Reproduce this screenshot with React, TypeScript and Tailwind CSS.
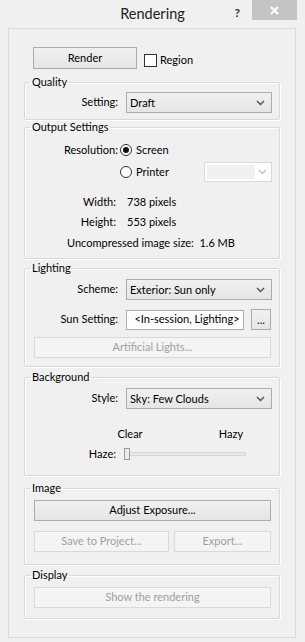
import React from 'react'

const font = "font-['Lato','Noto_Sans',sans-serif]"

function Chevron({ light }: { light?: boolean }) {
  return (
    <svg width="9" height="6" viewBox="0 0 9 6" className="shrink-0">
      <path d="M1 1 L4.5 4.5 L8 1" fill="none" stroke={light ? '#c4c4c4' : '#555'} strokeWidth="1.5" />
    </svg>
  )
}

function Select({ value, className = '' }: { value: string; className?: string }) {
  return (
    <div
      className={`flex items-center justify-between h-[21px] border border-[#acacac] bg-gradient-to-b from-[#f0f0f0] to-[#e5e5e5] pl-[3px] pr-[6px] ${className}`}
    >
      <span className="leading-none">{value}</span>
      <Chevron />
    </div>
  )
}

function Button({ label, disabled, className = '' }: { label: string; disabled?: boolean; className?: string }) {
  return (
    <div
      className={`flex items-center justify-center h-[21px] border ${
        disabled
          ? 'border-[#d9d9d9] bg-[#f4f4f4] text-[#a0a0a0]'
          : 'border-[#acacac] bg-gradient-to-b from-[#f0f0f0] to-[#e5e5e5] text-black'
      } ${className}`}
    >
      {label}
    </div>
  )
}

function Group({ title, className = '', children }: { title: string; className?: string; children: React.ReactNode }) {
  return (
    <fieldset
      className={`border border-[#d9d9d9] rounded-[2px] shadow-[inset_1px_1px_0_#fff,1px_1px_0_#fff] ${className}`}
    >
      <legend className="ml-[5px] px-[2px] leading-[14px]">{title}</legend>
      {children}
    </fieldset>
  )
}

function Label({ text, w = 'w-[93px]' }: { text: string; w?: string }) {
  return <div className={`${w} shrink-0 text-right`}>{text}</div>
}

export default function App() {
  return (
    <div className={`w-[305px] h-[642px] bg-[#f0f0f0] text-[11px] text-black ${font}`}>
      {/* title bar */}
      <div className="grid grid-cols-[1fr_auto_1fr] h-[28px]">
        <div />
        <div className="text-[14.5px] leading-[28px] text-[#222]">Rendering</div>
        <div className="flex justify-end items-start pr-[8px]">
          <span className="mt-[4px] font-bold text-[12px] text-[#333]">?</span>
          <div className="ml-[12px] w-[45px] h-[20px] bg-[#c4c4c4] flex items-center justify-center">
            <svg width="9" height="9" viewBox="0 0 9 9">
              <path d="M1 1 L8 8 M8 1 L1 8" stroke="#fff" strokeWidth="2" />
            </svg>
          </div>
        </div>
      </div>

      {/* panel */}
      <div className="ml-[8px] w-[288px] h-[610px] border border-[#d9d9d9] px-[15px] pt-[18px]">
        <div className="flex items-start">
          <Button label="Render" className="ml-[9px] w-[104px] h-[22px]" />
          <div className="flex items-center ml-[7px] mt-[6px]">
            <div className="w-[13px] h-[13px] border border-[#333] bg-white" />
            <span className="ml-[3px] leading-[14px]">Region</span>
          </div>
        </div>

        <Group title="Quality" className="mt-[6px]">
          <div className="flex items-center pt-[3px] pb-[6px]">
            <Label text="Setting:" />
            <Select value="Draft" className="ml-[8px] w-[146px]" />
          </div>
        </Group>

        <Group title="Output Settings">
          <div className="pt-[6px] pb-[5px]">
            <div className="flex items-center h-[20px]">
              <Label text="Resolution:" />
              <div className="ml-[2px] w-[12px] h-[12px] rounded-full border border-[#333] bg-white flex items-center justify-center">
                <div className="w-[6px] h-[6px] rounded-full bg-[#111]" />
              </div>
              <span className="ml-[4px]">Screen</span>
            </div>
            <div className="flex items-center h-[20px] mt-[2px]">
              <div className="w-[93px] shrink-0" />
              <div className="ml-[2px] w-[12px] h-[12px] rounded-full border border-[#333] bg-white" />
              <span className="ml-[4px]">Printer</span>
              <div className="ml-auto mr-[7px] w-[68px] h-[20px] border border-[#d9d9d9] bg-white flex items-center p-[2px]">
                <div className="w-[48px] h-full bg-[#f0f0f0]" />
                <div className="flex-1 flex justify-center">
                  <Chevron light />
                </div>
              </div>
            </div>
            <div className="flex items-center h-[20px] mt-[10px]">
              <Label text="Width:" w="w-[91px]" />
              <span className="ml-[11px]">738 pixels</span>
            </div>
            <div className="flex items-center h-[20px]">
              <Label text="Height:" w="w-[91px]" />
              <span className="ml-[11px]">553 pixels</span>
            </div>
            <div className="flex items-center h-[20px] mt-[1px] pl-[42px]">
              Uncompressed image size:&nbsp; 1.6 MB
            </div>
          </div>
        </Group>

        <Group title="Lighting" className="mt-[2px]">
          <div className="pt-[4px] pb-[8px]">
            <div className="flex items-center">
              <Label text="Scheme:" />
              <Select value="Exterior: Sun only" className="ml-[8px] w-[146px]" />
            </div>
            <div className="flex items-center mt-[9px]">
              <Label text="Sun Setting:" />
              <div className="ml-[8px] w-[118px] h-[20px] border border-[#acacac] bg-white flex items-center justify-center pl-[4px] whitespace-nowrap">
                &lt;In-session, Lighting&gt;
              </div>
              <Button label="..." className="ml-[7px] w-[20px] h-[20px] leading-none" />
            </div>
            <Button label="Artificial Lights..." disabled className="mt-[7px] ml-[9px] w-[237px] h-[20px]" />
          </div>
        </Group>

        <Group title="Background" className="mt-[3px]">
          <div className="pt-[4px] pb-[14px]">
            <div className="flex items-center">
              <Label text="Style:" />
              <Select value="Sky: Few Clouds" className="ml-[8px] w-[146px]" />
            </div>
            <div className="flex mt-[18px] leading-[14px]">
              <div className="ml-[85px] w-[40px] text-center">Clear</div>
              <div className="ml-[61px] w-[40px] text-center">Hazy</div>
            </div>
            <div className="flex items-center h-[14px] mt-[6px]">
              <Label text="Haze:" w="w-[91px]" />
              <div className="relative ml-[8px] w-[122px] h-[14px] flex items-center">
                <div className="w-full h-[4px] border border-[#d6d6d6] bg-[#e7e7e7]" />
                <div className="absolute left-0 top-[1px] w-[6px] h-[12px] border border-[#9a9a9a] bg-[#ececec]" />
              </div>
            </div>
          </div>
        </Group>

        <Group title="Image" className="mt-[5px]">
          <div className="pt-[5px] pb-[12px]">
            <Button label="Adjust Exposure..." className="ml-[9px] w-[237px]" />
            <div className="flex mt-[10px] ml-[9px]">
              <Button label="Save to Project..." disabled className="w-[135px]" />
              <Button label="Export..." disabled className="ml-[5px] w-[97px]" />
            </div>
          </div>
        </Group>

        <Group title="Display" className="mt-[3px]">
          <div className="pt-[5px] pb-[10px]">
            <Button label="Show the rendering" disabled className="ml-[9px] w-[237px]" />
          </div>
        </Group>
      </div>
    </div>
  )
}
